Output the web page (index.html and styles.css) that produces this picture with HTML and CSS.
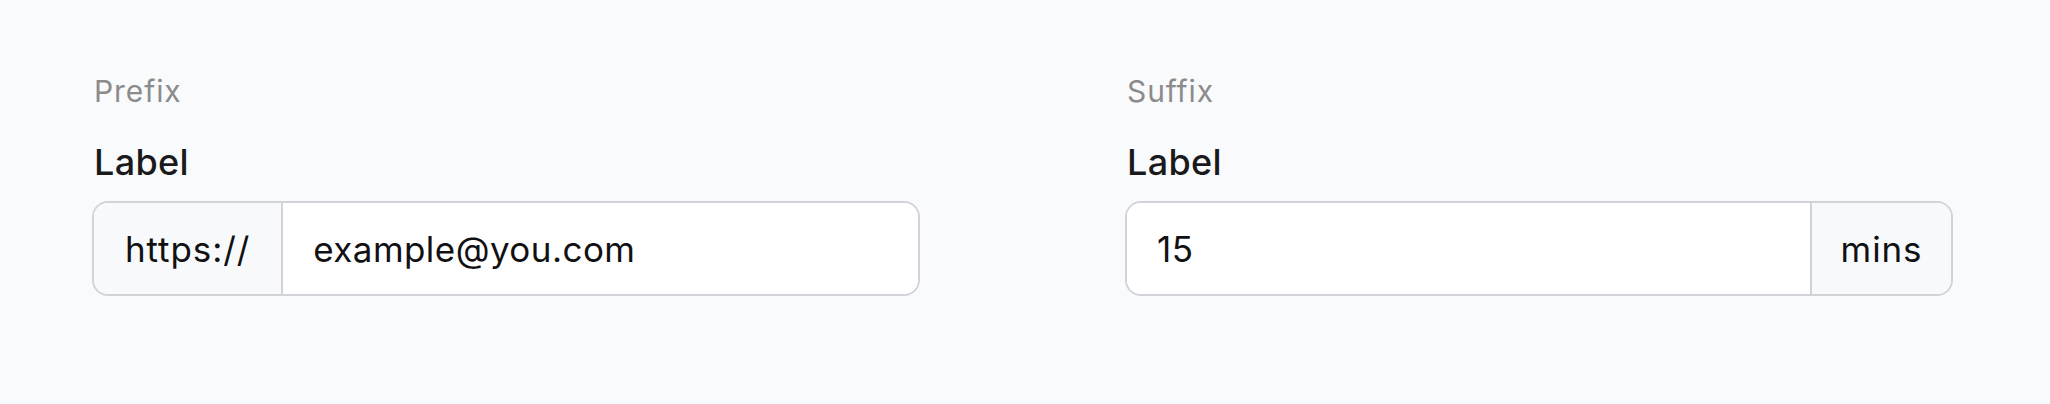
FILE: index.html
```html
<!DOCTYPE html>
<html lang="en">
<head>
<meta charset="utf-8">
<title>Input addons</title>
<link rel="stylesheet" href="styles.css">
</head>
<body>
<main class="grid">
  <section class="field">
    <div class="caption">Prefix</div>
    <label class="label" for="url">Label</label>
    <div class="group">
      <span class="addon addon-left">https://</span>
      <input id="url" class="control" type="text" value="example@you.com">
    </div>
  </section>
  <section class="field">
    <div class="caption">Suffix</div>
    <label class="label" for="mins">Label</label>
    <div class="group">
      <input id="mins" class="control" type="text" value="15">
      <span class="addon addon-right">mins</span>
    </div>
  </section>
</main>
</body>
</html>
```

FILE: styles.css
```css
* { box-sizing: border-box; }
html, body { margin: 0; padding: 0; }
body {
  background: #f9fafb;
  font-family: Inter, "Noto Sans", sans-serif;
  color: #111113;
  width: 2050px;
  height: 404px;
}
.grid {
  display: grid;
  grid-template-columns: 1fr 1fr;
  column-gap: 205px;
  padding: 73px 97px 0 92px;
}
.field {
  display: flex;
  flex-direction: column;
}
.caption {
  padding-left: 2px;
  font-size: 30px;
  line-height: 36px;
  color: #8b8b8b;
  letter-spacing: 0.9px;
}
.label {
  margin-top: 31px;
  padding-left: 2px;
  font-size: 36px;
  line-height: 44px;
  font-weight: 500;
  letter-spacing: 0.3px;
  color: #1a1a1c;
}
.group {
  margin-top: 17px;
  display: flex;
  height: 95px;
  border: 2.5px solid #d2d3d8;
  border-radius: 16px;
  overflow: hidden;
  background: #ffffff;
}
.addon {
  display: flex;
  align-items: center;
  padding: 0 31px;
  font-size: 35px;
  letter-spacing: 0.9px;
  background: #f8f9fb;
  color: #111113;
  flex: none;
}
.addon-left { border-right: 2.5px solid #d2d3d8; }
.addon-right {
  border-left: 2.5px solid #d2d3d8;
  padding: 0 28.5px;
}
.control {
  flex: 1;
  min-width: 0;
  border: 0;
  outline: 0;
  margin: 0;
  padding: 0 30px;
  background: #ffffff;
  font-family: Inter, "Noto Sans", sans-serif;
  font-size: 35px;
  letter-spacing: 0.45px;
  color: #111113;
}
```
